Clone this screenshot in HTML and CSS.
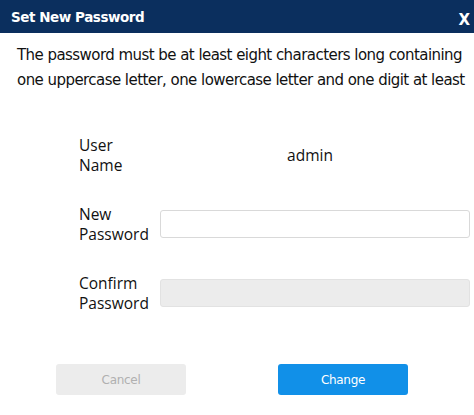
FILE: index.html
```html
<!DOCTYPE html>
<html>
<head>
<meta charset="utf-8">
<link rel="stylesheet" href="styles.css">
</head>
<body>
<div class="dialog">
  <div class="titlebar">
    <span class="title">Set New Password</span>
    <span class="close">X</span>
  </div>
  <p class="hint">The password must be at least eight characters long containing one uppercase letter, one lowercase letter and one digit at least</p>
  <div class="form">
    <div class="label">User<br>Name</div>
    <div class="value">admin</div>
    <div class="label">New<br>Password</div>
    <div class="field"><input class="input" type="password"></div>
    <div class="label">Confirm<br>Password</div>
    <div class="field"><input class="input" type="password" disabled></div>
  </div>
  <div class="actions">
    <button class="btn btn-cancel" disabled>Cancel</button>
    <button class="btn btn-primary">Change</button>
  </div>
</div>
</body>
</html>
```
FILE: styles.css
```css
html, body {
  margin: 0;
  padding: 0;
  background: #fff;
}
.dialog {
  width: 474px;
  height: 415px;
  font-family: "DejaVu Sans", Verdana, sans-serif;
  color: #111;
}
.titlebar {
  height: 33px;
  background: #0b2f5e;
  color: #fff;
  display: flex;
  align-items: center;
  justify-content: space-between;
  padding: 0 4px 0 11px;
}
.title {
  font-weight: bold;
  font-size: 13.5px;
  letter-spacing: -0.45px;
}
.close {
  font-size: 15px;
  font-weight: bold;
  margin-top: 6px;
}
.hint {
  margin: 10px 0 0 17px;
  width: 452px;
  font-size: 15px;
  line-height: 25px;
  letter-spacing: -0.55px;
}
.form {
  margin: 42px 4px 0 79px;
  display: grid;
  grid-template-columns: 81px 1fr;
  row-gap: 29px;
  align-items: center;
}
.label {
  font-family: "Open Sans", "Noto Sans", sans-serif;
  font-size: 15.5px;
  line-height: 20px;
  height: 40px;
}
.value {
  font-family: "Open Sans", "Noto Sans", sans-serif;
  font-size: 15.5px;
  text-align: center;
  padding-right: 10px;
}
.field {
  display: flex;
}
.input {
  flex: 1;
  box-sizing: border-box;
  height: 28px;
  border: 1px solid #d9d9d9;
  border-radius: 3px;
  background: #fff;
  margin: 0;
  padding: 0 6px;
  outline: none;
}
.input:disabled {
  background: #ececec;
  border-color: #e2e2e2;
}
.actions {
  margin: 51px 0 0 56px;
  display: flex;
  gap: 92px;
}
.btn {
  width: 130px;
  height: 31px;
  border: none;
  border-radius: 3px;
  font-family: "DejaVu Sans", Verdana, sans-serif;
  font-size: 12px;
  letter-spacing: -0.3px;
  padding: 0;
}
.btn-cancel {
  background: #ececec;
  color: #b0b0b0;
}
.btn-primary {
  background: #1190e8;
  color: #fff;
}
```
